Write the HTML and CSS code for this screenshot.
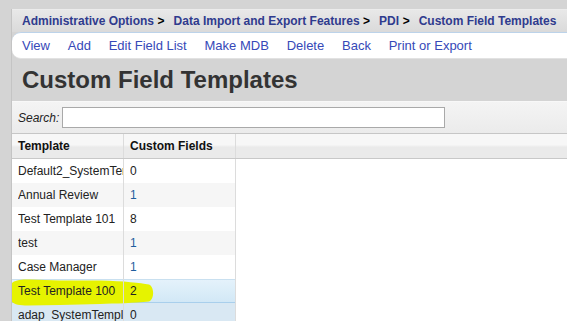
FILE: index.html
```html
<!DOCTYPE html>
<html>
<head>
<meta charset="utf-8">
<title>Custom Field Templates</title>
<link rel="stylesheet" href="styles.css">
</head>
<body>
<div class="page">
  <div class="crumbs">
    <a class="crumb">Administrative Options</a><span class="sep">&gt;</span>
    <a class="crumb">Data Import and Export Features</a><span class="sep">&gt;</span>
    <a class="crumb">PDI</a><span class="sep">&gt;</span>
    <span class="crumb">Custom Field Templates</span>
  </div>
  <nav class="toolbar">
    <a class="tool">View</a>
    <a class="tool">Add</a>
    <a class="tool">Edit Field List</a>
    <a class="tool">Make MDB</a>
    <a class="tool">Delete</a>
    <a class="tool">Back</a>
    <a class="tool">Print or Export</a>
  </nav>
  <h1 class="title">Custom Field Templates</h1>
  <div class="search">
    <label class="search-label">Search:</label>
    <input class="search-input" type="text">
  </div>
  <div class="grid">
    <div class="grid-head">
      <div class="hcell c1">Template</div>
      <div class="hcell c2">Custom Fields</div>
      <div class="hcell hfill"></div>
    </div>
    <div class="grid-body">
      <table class="rows">
        <tr><td class="c1"><span class="txt">Default2_SystemTemplate</span></td><td class="c2"><span class="txt">0</span></td></tr>
        <tr class="alt"><td class="c1"><span class="txt">Annual Review</span></td><td class="c2"><span class="txt num">1</span></td></tr>
        <tr><td class="c1"><span class="txt">Test Template 101</span></td><td class="c2"><span class="txt">8</span></td></tr>
        <tr class="alt"><td class="c1"><span class="txt">test</span></td><td class="c2"><span class="txt num">1</span></td></tr>
        <tr><td class="c1"><span class="txt">Case Manager</span></td><td class="c2"><span class="txt num">1</span></td></tr>
        <tr class="hover"><td class="c1"><span class="txt">Test Template 100</span></td><td class="c2"><span class="txt">2</span></td></tr>
        <tr class="selected"><td class="c1"><span class="txt">adap_SystemTemplate</span></td><td class="c2"><span class="txt">0</span></td></tr>
      </table>
      <div class="bfill"></div>
    </div>
    <svg class="marker" viewBox="0 0 146 28" width="146" height="28">
      <path d="M1,8 C1,3 8,1 20,1.5 L50,2.5 L90,2.5 C115,3 130,5 139,6.5 C144.5,8.5 144.5,21.5 139,23.5 C125,25 105,25.5 90,26 L50,27 L18,27.5 C6,27.5 1,25.5 0,20 Z" fill="#e6f300"/>
    </svg>
  </div>
</div>
</body>
</html>
```
FILE: styles.css
```css
html, body {
  margin: 0;
  padding: 0;
}
body {
  background: #d4d4d4;
  font-family: "Liberation Sans", Arial, sans-serif;
  padding: 9px 0 0 11px;
  height: 321px;
  box-sizing: border-box;
  overflow: hidden;
}
.page {
  border-left: 1px solid #c4c4c4;
  height: 312px;
  overflow: hidden;
}
.crumbs {
  display: flex;
  align-items: center;
  height: 23px;
  padding-left: 10px;
  background: linear-gradient(#e8e8e8, #dadada);
  border-top: 1px solid #ececec;
  box-sizing: border-box;
  font-size: 12px;
  font-weight: bold;
  white-space: nowrap;
}
.crumb {
  color: #2f3b8e;
}
.sep {
  color: #000;
  margin: 0 9px 0 3.5px;
}
.toolbar {
  display: flex;
  align-items: center;
  gap: 17.8px;
  height: 25px;
  padding-left: 10px;
  background: #fff;
  border-top: 1px solid #bcd3ea;
  border-bottom: 1px solid #e2e2e2;
  border-radius: 9px 0 0 9px;
  font-size: 13px;
  white-space: nowrap;
}
.tool {
  color: #3649b8;
}
.title {
  margin: 0;
  padding: 7px 10px 7px;
  line-height: 28px;
  font-size: 24px;
  font-weight: bold;
  color: #333;
  white-space: nowrap;
}
.search {
  display: flex;
  align-items: center;
  height: 32px;
  box-sizing: border-box;
  padding-left: 6px;
  background: linear-gradient(#f4f4f4, #ebebeb);
  border-top: 1px solid #f8f8f8;
}
.search-label {
  font-size: 12px;
  font-style: italic;
  color: #222;
}
.search-input {
  margin: 0 0 0 3px;
  width: 383px;
  height: 21px;
  box-sizing: border-box;
  border: 1px solid #a9a9a9;
  background: #fff;
  padding: 0;
}
.grid {
  position: relative;
  border-top: 1px solid #c6c6c6;
  background: #fff;
}
.grid-head {
  display: flex;
  height: 25px;
  box-sizing: border-box;
  background: linear-gradient(#f7f7f7 45%, #eaeaea 55%, #eaeaea);
  border-bottom: 1px solid #c8c8c8;
}
.hcell {
  box-sizing: border-box;
  padding-left: 6px;
  line-height: 24px;
  font-size: 12px;
  font-weight: bold;
  color: #111;
  white-space: nowrap;
}
.hcell.c1 {
  width: 112px;
  border-right: 1px solid #dcdcdc;
}
.hcell.c2 {
  width: 112px;
  border-right: 1px solid #dcdcdc;
}
.hfill {
  flex: 1;
}
.grid-body {
  display: flex;
  align-items: flex-start;
  height: 180px;
}
.rows {
  border-collapse: separate;
  border-spacing: 0;
  flex: none;
}
.rows td {
  position: relative;
  z-index: 2;
  height: 24px;
  padding: 0 0 0 6px;
  font-size: 12px;
  color: #222;
  white-space: nowrap;
  border-right: 1px solid #dcdcdc;
}
.txt {
  display: block;
  overflow: hidden;
  width: 105px;
  line-height: 24px;
}
.num {
  color: #1f5d9e;
}
.alt {
  background: #f6f6f6;
}
.hover {
  background: linear-gradient(#c9e0f0 0 1px, #e4f2fb 1px, #d2e8f6 23px, #a9cfec 23px);
}
.selected {
  background: #d9e8f3;
}
.bfill {
  flex: 1;
  align-self: stretch;
  background: #fff;
}
.marker {
  position: absolute;
  left: -2px;
  top: 144px;
  z-index: 1;
}
```
